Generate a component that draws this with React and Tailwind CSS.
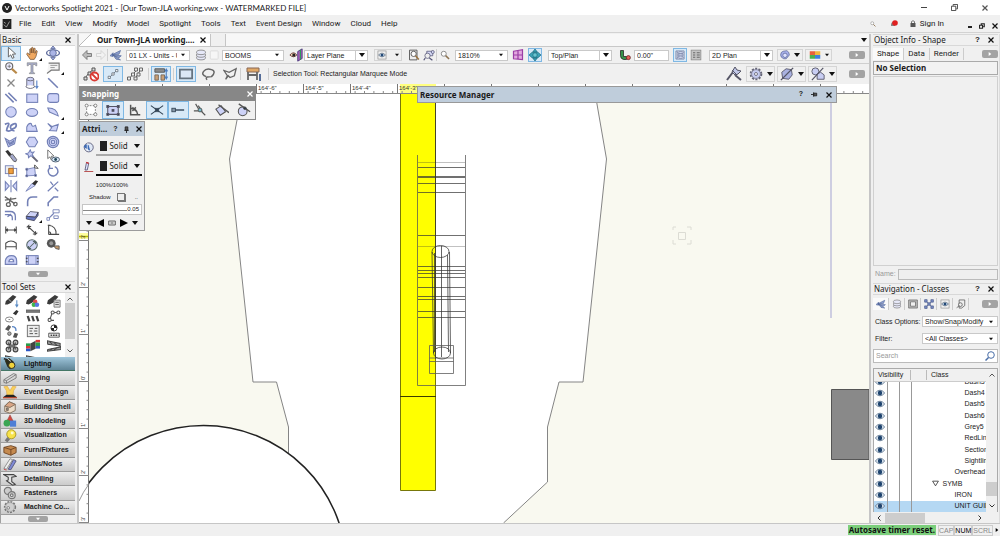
import React from "react";

const B = "#7380b6";
const F = "#cdd2f7";
const D = "#4a4a4a";

/* Line drawings on a 16 x 16 grid */
const ART = {
  arrow: <path d="M5 1.500v11l2.700-2.400 1.800 4 2-.9-1.800-3.800 3.600-.3z" fill="#fff" stroke="#555" />,
  hand: <path d="M3 8l2.500 2V3.500q1-1 1.600 0V8l.4-6q1-1 1.700 0v6l.8-5.300q1.200-.7 1.600.4L11.400 8.500l1.300-3.200q1.200-.2 1.300.8L12.500 12l-2 3.300H6L2 9.500Q2 8 3 8z" fill="#f0a860" stroke="#6b4a2c" strokeWidth=".8" />,
  flyover: <g stroke="#5f6c9c" fill="#aab4e6"><ellipse cx="8" cy="8" rx="7.300" ry="3.500" fill="none" strokeWidth="1.500" /><circle cx="8" cy="8" r="3.800" /><path d="M8 0l2.500 3h-5zM8 16l2.500-3h-5z" /></g>,
  zoom: <g fill="none" stroke="#666"><circle cx="6" cy="6" r="4" fill="#eef" strokeWidth="1.300" /><path d="M6 4v4M4 6h4" strokeWidth=".8" /><path d="M9 9l5.500 5" stroke="#b98a4a" strokeWidth="2.500" /></g>,
  text: <path d="M2.500 2h11v3.500h-1.200L11.500 4H9.200v9l1.800.6v.9H5v-.9l1.800-.6V4H4.500l-.8 1.500H2.500z" fill="#a9aecb" stroke="#777" strokeWidth=".6" />,
  callout: <g fill="#f4f4f4" stroke="#777"><path d="M3 2.500h12v8H6L1.500 14H1" strokeWidth="1.300" /><path d="M5 5h8M5 7.500h5" strokeWidth=".8" /></g>,
  cross: <path d="M4 4l8 8M12 4l-8 8" stroke="#888" strokeWidth="1.500" />,
  symbol: <g fill={F} stroke="#667"><path d="M2 3.500v7q4 3 8 0v-7" /><ellipse cx="6" cy="3.500" rx="4" ry="2" /><path d="M2 10.500l-1 2q5 3.500 10 0l-1-2" fill="#fff" /><path d="M13.500 5v8M12 11.500l1.500 2.500 1.500-2.500" stroke="#5f87c8" strokeWidth="1.300" /></g>,
  line: <path d="M2.500 2.500l11 11" stroke={B} strokeWidth="1.800" />,
  dline: <path d="M1.500 3.500l9.500 9.500M5 2l9.500 9.500" stroke={B} strokeWidth="1.800" />,
  rect: <rect x="2" y="3.500" width="12.500" height="9.500" fill={F} stroke={B} strokeWidth="1.200" />,
  rrect: <rect x="2" y="3" width="12.500" height="10" rx="2.500" fill={F} stroke={B} strokeWidth="1.200" />,
  circle: <circle cx="8" cy="8" r="6" fill={F} stroke={B} strokeWidth="1.200" />,
  ellipse: <ellipse cx="8" cy="8.500" rx="6.500" ry="4.500" fill={F} stroke={B} strokeWidth="1.200" />,
  arc: <path d="M2 3.500Q12 3 14 12.500L4 8z" fill={F} stroke={B} strokeWidth="1.200" />,
  free: <path d="M1 5q6-3 4 1T3 12q4 2 7-2 4-1 4-4t-4-1-2 5 4 2" fill="none" stroke={B} strokeWidth="2" />,
  freeline: <path d="M2 13V8q2-5 5-4 1 4 3 3t2-1l2 7z" fill={F} stroke={B} strokeWidth="1.200" />,
  poly: <path d="M2 4l5 3.500L14 5l-2 7.500L4 12l2.500-3z" fill={F} stroke={B} strokeWidth="1.200" />,
  dpoly: <g fill="none" stroke={B} strokeWidth="1.300"><path d="M1.500 4l5 3 7-4-1.500 7-7 3.500z" fill={F} /><path d="M4 7l3 2.500 4-3-.5 2.500-4 2z" fill="#fff" /></g>,
  hexagon: <path d="M4.800 2.500h6.400L14.500 8l-3.300 5.500H4.800L1.500 8z" fill={F} stroke={B} strokeWidth="1.200" />,
  spiral: <g fill={F} stroke={B} strokeWidth="1.300"><circle cx="8" cy="8" r="6.500" /><circle cx="8" cy="8" r="4.300" /><circle cx="8" cy="8" r="2" /></g>,
  dropper: <g><path d="M1.500 2.500l3-1.500 4 5-2.500 2.500z" fill="#333" /><path d="M6.500 8l3-2.500 5 6.500-1 2.500-2.500-.5z" fill="#a4a9cc" stroke="#555" /></g>,
  wand: <g stroke={B} strokeWidth="1.200"><path d="M8 8l6.500 6.500" stroke="#667" strokeWidth="2.200" /><path d="M6 1l1.200 3 3-.5-2 2.500 1.300 2.500-3-.7L4 10l-.2-3L1 5.500l3-1z" fill={F} /></g>,
  visib: <g><path d="M2 1v10l2.500-2 1.500 3.500 1.500-.7-1.500-3.400 3-.4z" fill="#fff" stroke="#666" /><ellipse cx="11" cy="12" rx="4.500" ry="2.800" fill="#d5e5f5" stroke="#456" /><circle cx="11" cy="12" r="1.600" fill="#245" /></g>,
  clip: <g stroke={B}><rect x="1.500" y="2" width="9" height="9" fill="#eee" /><rect x="5.500" y="5" width="9" height="9" fill="none" /><path d="M5.500 5h5v6h-5z" fill="#f0a040" stroke="#b46d1a" /></g>,
  reshape: <g stroke={B}><path d="M2 6l9-2 1 9-10 .5z" fill={F} /><path d="M11 1l4 4-4-.5z" fill="#fff" stroke="#444" /><path d="M1 5h2v2H1zM1 12.500h2v2H1zM11 12h2v2h-2z" fill="#334" /></g>,
  rotate: <path d="M4 4.500A5.500 5.500 0 1 0 10 3M4 1v4h4" fill="none" stroke={B} strokeWidth="1.600" />,
  mirror: <g fill={F} stroke={B} strokeWidth="1.200"><path d="M1.500 3v10L6 8zM14.500 3v10L10 8z" /><path d="M8 1v14" /></g>,
  knife: <g><path d="M1 14L8 5l3.500 2.500z" fill={F} stroke={B} /><path d="M8 5l4-3.500 3 1-3.500 5z" fill="#333" /></g>,
  trim: <path d="M2 14L14 3M5 3l3 4M10 10l4 4" stroke={B} strokeWidth="1.400" />,
  scissors: <g fill="none" stroke="#666" strokeWidth="1.500"><path d="M1 3l11 8M1 7l13-2" /><circle cx="13" cy="11.500" r="2" /><circle cx="5" cy="12" r="2.200" /><path d="M6 10l2-6" /></g>,
  fillet: <path d="M3 14V9q0-5.500 6-5.500h5" fill="none" stroke={B} strokeWidth="1.800" />,
  chamfer: <path d="M2.500 14V10L9 3.500h5" fill="none" stroke={B} strokeWidth="1.800" />,
  offset: <path d="M1 4h6q6 0 6 6v4M1 7.500h4.500q4 0 4 4V14M4 10l4-3" fill="none" stroke={B} strokeWidth="1.500" />,
  extrude: <g stroke="#334" strokeWidth=".8"><path d="M1.500 9.500L6 4l9 1-3 5.500z" fill={F} /><path d="M1.500 9.500v3l9 2 4.500-6V5l-3 5.500z" fill="#6575c0" /></g>,
  conn: <g fill="#fff" stroke={B}><path d="M2 13L9 6" strokeWidth="1.300" /><path d="M8 2h7v3.500H8zM9 9h5v3H9zM1 11h3v3H1z" /></g>,
  dim: <path d="M2 4v8M14 4v8M2 8h12M4.500 6.500L2 8l2.500 1.500M11.500 6.500L14 8l-2.500 1.500" fill="none" stroke={D} strokeWidth="1.200" />,
  dimdiag: <path d="M2 5l3-3M11 14l3-3M3.500 4l9 8.500M4 7V4h3M12 9.500v3H9" fill="none" stroke={D} strokeWidth="1.200" />,
  dimang: <path d="M3 13V2.500q9 1 8.500 10.500M2 2.500h3M3 13h12M5.500 13q0-3-2.500-3" fill="none" stroke={D} strokeWidth="1.200" />,
  dimarc: <path d="M2 13V6q6-5 12 0v7M2 10h12" fill="none" stroke={D} strokeWidth="1.200" />,
  dia: <g fill={F} stroke="#566" strokeWidth="1.200"><circle cx="8" cy="8" r="6" /><path d="M4 12l8-8M9 4h3v3M4 9v3h3" /></g>,
  tape: <g><circle cx="6" cy="6" r="5" fill="#555" /><circle cx="6" cy="6" r="2.200" fill="#999" /><path d="M9 9h6v4l-4-1z" fill="#c79a6a" stroke="#555" /></g>,
  protract: <path d="M1.500 13V9q1-6 7-6t6 6v4zM5.500 10q.5-3 3-3t2.500 3z" fill={F} fillRule="evenodd" stroke={B} strokeWidth="1.300" />,
  stake: <g fill={F} stroke={B} strokeWidth="1.200"><rect x="1.500" y="3" width="13.500" height="10" /><path d="M4 3v10M12.500 3v10" strokeWidth=".8" /><path d="M1 6h2M1 10h2M13.500 6h2M13.500 10h2" stroke="#333" /></g>,
  lightdn: <g><path d="M0 12l1-4 8-7 4 2-6 7-4 2z" fill="#3a3a3a" /><path d="M4 6l3.500 3" stroke="#bbb" /><path d="M13.500 7v7M12 12l1.500 2.500L15 12" fill="none" stroke="#5a8bc4" strokeWidth="1.200" /></g>,
  lightrgb: <g><path d="M0 11l1-4 8-6 4 2-6 7-4 2z" fill="#3a3a3a" /><circle cx="10.500" cy="9" r="2.600" fill="#e24b4b" /><circle cx="9" cy="12.300" r="2.600" fill="#3fb54a" /><circle cx="12.500" cy="12.300" r="2.600" fill="#5a78e0" /></g>,
  lightdoc: <g><path d="M0 11l1-4 8-6 4 2-6 7-4 2z" fill="#3a3a3a" /><path d="M8 7h7v8H8z" fill="#ddd" stroke="#777" /><path d="M9.500 9.500h4M9.500 12h4" stroke="#555" /></g>,
  focus: <g><ellipse cx="5" cy="12" rx="4.500" ry="2.800" fill="#fff" stroke="#777" /><path d="M4 12h2" stroke="#777" /><path d="M9 5l4-4 2.500 1.500-3 4.500z" fill="#333" /></g>,
  bars: <g fill="#777" stroke="#555" strokeWidth=".6"><path d="M0 1h16v3H0z" /><path d="M2 8l2 6M7 8l2 6M12 8l2 6" stroke="#444" strokeWidth="2.600" /></g>,
  chain: <g fill="#fff" stroke="#555" strokeWidth="1.200"><path d="M3 13L6 4l7 0M4 13h4" /><circle cx="3" cy="12.500" r="1.800" /><circle cx="6.500" cy="4" r="1.800" /><circle cx="13" cy="4" r="1.800" /></g>,
  spots: <g><path d="M0 6l4-5 3 2-3 5zM9 15l2-5 4 1-2 5z" fill="#555" /><path d="M8 3q5 0 4.500 5" fill="none" stroke="#5b86c5" strokeWidth="1.500" /><circle cx="5" cy="11" r="2" fill="#aaa" stroke="#555" /></g>,
  legend: <g fill="#eee" stroke="#666"><rect x="1.500" y="1.500" width="13.500" height="13" /><path d="M4 5h4M10 5h3M4 8h3M9 8h4M4 11h4M10 11h3" stroke="#444" /></g>,
  lblid: <g><circle cx="8" cy="4.500" r="3.500" fill="#fff" stroke="#222" /><path d="M8 1v3.500h3.500A3.500 3.500 0 0 0 8 1zM8 8V4.500H4.500A3.500 3.500 0 0 0 8 8z" fill="#222" /><path d="M2 10.500h12v4.500H2z" fill="#fff" stroke="#444" /><path d="M4 12.800h9" stroke="#444" strokeWidth="1.800" strokeDasharray="2 .8" /></g>,
  four: <g fill="#bbb" stroke="#444" strokeWidth="1.300"><circle cx="4" cy="4" r="2.700" /><circle cx="12" cy="4" r="2.700" /><circle cx="4" cy="12" r="2.700" /><circle cx="12" cy="12" r="2.700" /><path d="M4 4l1 3h6l1-3M4 12l1-3h6l1 3" fill="none" /></g>,
  cmyk: <g><path d="M0 5h5v3H0z" fill="#2a9a4a" /><path d="M0 8h5v3H0z" fill="#d33" /><path d="M0 11h5v3H0z" fill="#2a55c5" /><path d="M5 5l6-3v9l-6 3z" fill="#444" /><path d="M11 1h5v3h-5z" fill="#d33" /><path d="M11 4h5v4h-5z" fill="#2a9a4a" /><path d="M11 8h5v3h-5z" fill="#345ac0" /></g>,
  truss: <g stroke="#444" strokeWidth="1.200" fill="#999"><path d="M0 2l15 3v3L1 6zM1 12l15-3v3L0 14z" /><path d="M3 3l3 3M8 4l3 3M3 13l3-2M8 13l3-3" /></g>,
  catLight: <g><path d="M2 4l5-3 5 4 1 6-5 3-3-3z" fill="#2c2c1c" /><circle cx="10" cy="9.500" r="3.600" fill="#f2d43c" stroke="#222" /><path d="M5 2l4 3" stroke="#eee" /><path d="M1 2l4 1" stroke="#222" strokeWidth="1.500" /></g>,
  catRig: <path d="M1 10L12 3l3 1v4L4 14l-3-1zM1 10l3 1 11-7M4 11v3" fill="#d7d7d7" stroke="#777" />,
  catEvent: <g><path d="M4.500 12Q5 6 1 2l4-.5 3 5 3-5 4 .5q-4 4-3.500 10z" fill="#f7cf5a" stroke="#e0a030" strokeWidth=".6" /><path d="M0 14l4-3h8l4 3z" fill="#222" /><path d="M0 14.500h16" stroke="#b4452c" strokeWidth="1.500" /></g>,
  catBuild: <g stroke="#7d6a58"><path d="M2 7l5-5 7 3v7l-6 3-6-2z" fill="#ecdcc8" /><path d="M7 2L2 7l6 1.500L14 5z" fill="#d9a585" /><path d="M4 9h2v3H4z" fill="#888" /></g>,
  cat3d: <g><path d="M8 1l3.500 7h-7z" fill="#d4463c" stroke="#833" strokeWidth=".6" /><circle cx="4.500" cy="10.500" r="3.800" fill="#3aa552" /><path d="M8 7.500h7v7H8z" fill="#4f7fd6" /></g>,
  catVis: <g><circle cx="9.500" cy="6" r="5.200" fill="#f7e24a" stroke="#a59220" /><path d="M5 9l3 3-3 3-3-2z" fill="#777" /><circle cx="10.500" cy="4.500" r="1.700" fill="#fffbd0" /></g>,
  catFurn: <g stroke="#6d4422"><path d="M1 5l8-2 6 2v6l-6 3-8-3z" fill="#c58a4f" /><path d="M1 5l8 2.500L15 5M9 7.500V14" fill="none" /></g>,
  catDims: <g><path d="M1 13L8 2l3 1-7 11z" fill="#eee" stroke="#888" /><path d="M6 14l6-11 3 1.500-6 10z" fill="#7f8ad6" stroke="#557" /><path d="M1 14l3 1" stroke="#c44" /></g>,
  catDetail: <path d="M1 3h11l3 2-5 1v5l4 3-3 1-7-5 2-1V6z" fill="#e3e3e3" stroke="#444" strokeWidth="1.200" />,
  catFast: <g fill="#ccc" stroke="#777" strokeWidth="1.300"><circle cx="5.500" cy="5.500" r="4" /><circle cx="10" cy="10.500" r="4" /><circle cx="10" cy="10.500" r="1.500" fill="#fff" /></g>,
  catMach: <g fill="#cfcfcf" stroke="#777"><circle cx="8" cy="8" r="6" strokeWidth="2" strokeDasharray="2.200 1.300" /><circle cx="8" cy="8" r="5" stroke="#aaa" /><circle cx="6" cy="9" r="1.500" fill="#eee" /></g>,
  back: <path d="M8 2L2 8l6 6v-4h6V6H8z" fill="#bbb" stroke="#777" strokeWidth="1.200" />,
  fwd: <path d="M8 2l6 6-6 6v-4H2V6h6z" fill="#f2f2f2" stroke="#ccc" />,
  classes: <g fill="#8fa0d0" stroke="#4e6498" strokeWidth=".9"><path d="M0 9l4-4v5zM3 7.500L14 2l-2 5zM3 8l12 1-3 2.500zM4 8l10 6.500-6-1z" /></g>,
  layers: <g fill="#e6e8f8" stroke="#777"><ellipse cx="8" cy="11.500" rx="6" ry="3" /><ellipse cx="8" cy="8" rx="6" ry="3" /><ellipse cx="8" cy="4.500" rx="6" ry="3" /></g>,
  blank: <rect x="3" y="2.500" width="10.500" height="11" rx="1" fill="#f6f6f6" stroke="#d5d5d5" />,
  plane: <g><path d="M1 8q4-5 8 0-4 4-8 0z" fill="#f4d9bb" stroke="#633" /><circle cx="5.500" cy="8" r="1.800" fill="#222" /><path d="M10 4l5-3v11l-5 3z" fill="#b35cc0" stroke="#437" /><path d="M13 2v11" stroke="#2e9b5c" strokeWidth="1.500" /></g>,
  eyebox: <g><rect x="1.500" y="1.500" width="13" height="13" fill="#f2f2f2" stroke="#888" /><path d="M2.500 8q5.500-6 11 0-5.500 6-11 0z" fill="#c9d8ea" stroke="#456" /><circle cx="8" cy="8" r="2.200" fill="#234a78" /></g>,
  zoomdoc: <g fill="none" stroke="#555" strokeWidth="1.200"><path d="M2 1.500h10v13H2z" fill="#eee" /><circle cx="7.500" cy="6.500" r="3.500" fill="#fff" /><path d="M10 9l4.500 5" stroke="#9a7340" strokeWidth="2" /></g>,
  zoomsel: <g fill="#d5d9f5" stroke="#557"><path d="M5 3h8v6H5z" /><circle cx="13" cy="4" r="2" /><circle cx="6" cy="9" r="3.500" fill="#eee" /><path d="M3 12l-2 3M8.500 12l4 3" strokeWidth="1.600" /></g>,
  mag: <g fill="none" stroke="#777" strokeWidth="1.300"><circle cx="6" cy="6" r="4" fill="#fff" /><path d="M9 9l5.500 5.500" stroke="#8d7350" strokeWidth="2.400" /></g>,
  pink: <path d="M2 3l12-2v13L2 13zM8 2v12M2 8h12" fill="#e3a8e0" stroke="#9b3ea6" strokeWidth="1.600" />,
  teal: <g fill="#3ea5b8" stroke="#1d6f83"><path d="M0 8l4-3.500h8L16 8l-4 3.500H4zM8 0l3 4H5zM8 16l3-4H5z" /><circle cx="8" cy="8" r="3" fill="#6bc4d0" /></g>,
  angle: <g><path d="M2 2h4v8h4v4H6Q2 13 2 9z" fill="#37924a" stroke="#222" /><circle cx="12.500" cy="11.500" r="2.700" fill="#e8605a" stroke="#622" /></g>,
  sheets: <g fill="#dfe5f8" stroke="#4d5c88"><path d="M1.500 1.500h13v13h-13z" fill="#f4f8ff" /><ellipse cx="9" cy="4.500" rx="4.500" ry="1.800" /><ellipse cx="9" cy="8" rx="4.500" ry="1.800" /><ellipse cx="9" cy="11.500" rx="4.500" ry="1.800" /><path d="M3.500 2v12" /></g>,
  list: <g><rect x="1.500" y="1.500" width="13" height="13" fill="#c4c4c4" stroke="#888" /><path d="M4 5h3M9 5h4M4 8h3M9 8h4M4 11h3M9 11h4" stroke="#666" strokeWidth="1.300" /></g>,
  orb: <g fill="#a7b0ea" stroke="#4a5688"><path d="M1 8q0-5 4-6l6-1q4 2 4 7l-5 6H6Q1 12 1 8z" /><circle cx="8" cy="8.500" r="3.500" fill="#dfe3ff" /></g>,
  swatch: <g><path d="M1 3h7v5H1z" fill="#e8603c" /><path d="M1 8h7v5H1z" fill="#4bb04f" /><path d="M8 3h7v5H8z" fill="#f0b73e" /><path d="M8 8h7v5H8z" fill="#3f7fe0" /></g>,
  nosel: <g fill="#ddd" stroke="#555"><path d="M2 12L6 7l4-3" /><path d="M1 11h3v3H1zM5 6h3v3H5zM9 2h3v3H9z" /><circle cx="11.500" cy="10.500" r="4" fill="#fff" stroke="#d93a32" strokeWidth="1.800" /><path d="M9 8l5 5" stroke="#d93a32" strokeWidth="1.800" /></g>,
  nodes: <g fill="#fff" stroke="#5a6470"><path d="M3 13l5-5 5-5" /><path d="M1.500 11h3v3h-3zM6.500 6.500h3v3h-3zM11.500 2h3v3h-3z" /></g>,
  nodes2: <g fill="#eee" stroke="#666"><path d="M2 13l4-5 4-4M8 13l3-5 3-5" /><path d="M.5 11h3v3h-3zM4.500 7h3v3h-3zM7.500 2h3v3h-3zM7 11h3v3H7zM10 7h3v3h-3zM12.500 2h3v3h-3z" /></g>,
  table: <g><path d="M1 2h11v4H1z" fill="#8c8c8c" stroke="#555" /><path d="M1 9h4v6H1zM8 9h4v6H8z" fill="#c9a077" stroke="#765" /><path d="M14 3v10M12.500 5L14 2.500 15.500 5M12.500 11l1.500 2.500 1.500-2.500" fill="none" stroke="#4f7fc0" strokeWidth="1.300" /></g>,
  marq: <rect x="1" y="3" width="14" height="10" fill="#dbe7f5" stroke="#66737f" strokeWidth="2" />,
  lasso: <path d="M6 11Q0 9 3 5t9-2 0 8l-5 .5q-2 1 0 3" fill="none" stroke="#666" strokeWidth="1.700" />,
  plasso: <path d="M3 14l2-4-4-6 6 2 8-4-2 8-5 2-2-2z" fill="none" stroke="#666" strokeWidth="1.500" />,
  bench: <g><path d="M1 2h12v4H1z" fill="#e0a866" stroke="#865" /><path d="M2 6v8M11 6v8M2 9h9" stroke="#666" strokeWidth="1.800" /><path d="M14 8v7" stroke="#556c98" strokeWidth="2" /></g>,
  plug: <g fill="#c0c6e6" stroke="#556"><path d="M1 14l6-8" strokeWidth="2" /><path d="M6 4l5 5M9 1l2 3 4 1-3 3-3 1-3-3z" /><path d="M9 9l6 5" strokeWidth="2" /></g>,
  gear: <g fill="#c5cbf0" stroke="#667"><circle cx="8" cy="8" r="6" strokeWidth="2.500" strokeDasharray="2.300 1.500" /><circle cx="8" cy="8" r="5" stroke="#889" /><circle cx="8" cy="8" r="1.700" fill="#fff" /></g>,
  slash: <g fill="#a9b1e0" stroke="#556"><path d="M2 6l5-4 6 1 1 6-4 5-7-1z" /><path d="M1 15L15 1" strokeWidth="1.600" /></g>,
  shape: <g fill="#c8cdf2" stroke="#556"><circle cx="5" cy="5" r="4" /><path d="M7 14V8l4-2 4 3v5z" /><path d="M1 15L14 1" strokeWidth="1.300" /></g>,
  sGrid: <g fill="#fff" stroke="#777"><path d="M3 3h10v10H3z" strokeDasharray="2 1.500" /><circle cx="3" cy="3" r="1.700" /><circle cx="13" cy="3" r="1.700" /><circle cx="3" cy="13" r="1.700" /><circle cx="13" cy="13" r="1.700" /></g>,
  sObj: <g fill="#cdd2f7" stroke="#556" strokeWidth="1.200"><path d="M2 4h12v9H2z" /><path d="M1 3h2v2H1zM13 3h2v2h-2zM1 12h2v2H1zM13 12h2v2h-2zM7 7.500h2v2H7z" fill="#223" /></g>,
  sAng: <path d="M3 2v11.500h11M3 6q7 0 8 7M5 5l4 4M9 5L5 9" fill="none" stroke="#555" strokeWidth="1.700" />,
  sInt: <g stroke="#345"><path d="M1 3l14 10M1 13L15 3" strokeWidth="1.300" /><path d="M6 6l4 4M10 6l-4 4" strokeWidth="2.200" /></g>,
  sPt: <g stroke="#345"><path d="M4 8h11" strokeWidth="1.600" /><rect x="1" y="6" width="4" height="4" fill="#89a" /></g>,
  sDist: <g stroke="#555" fill="#7bc"><path d="M3 1l4 7M1 9h9l-4-6M8 8l6 6" strokeWidth="1.300" fill="none" /><circle cx="8" cy="8" r="2.200" /></g>,
  sEdge: <g stroke="#555"><path d="M1 7l6-4 5 7-6 4z" fill="#cdd2f7" strokeWidth="1.200" /><path d="M4 2l12 9" strokeWidth="1.600" /></g>,
  sTan: <g stroke="#555"><circle cx="6.500" cy="9.500" r="5" fill="#cdd2f7" strokeWidth="1.200" /><path d="M2 1l13 9" strokeWidth="1.600" /><circle cx="9" cy="6" r="1.500" fill="#234" /></g>,
  bucket: <g><circle cx="9" cy="8.500" r="6" fill="#dfe8f6" stroke="#446" /><path d="M2 8q3-6 7-2l2 7" fill="#3d6bb5" /><path d="M7 3v10" stroke="#fff" /></g>,
  pen: <g><path d="M4 12L6 2l3 1-2 9z" fill="#dfe5ff" stroke="#446" /><path d="M5 1l4 1v2L6 3z" fill="#c33" /><path d="M3 14h12" stroke="#a22" /></g>,
  eye: <g><path d="M.5 8Q8-1 15.500 8 8 17 .5 8z" fill="#e6eef6" stroke="#58708c" strokeWidth="1.400" /><circle cx="8" cy="8" r="3.600" fill="#20456f" /></g>,
  frame: <path d="M1 1.500h14v13H1zM4 4.500h8v7H4z" fill="#bbb" fillRule="evenodd" stroke="#555" />,
  net: <g fill="#7f90c8" stroke="#3b4d80"><path d="M3 3l10 10M13 3L3 13" /><path d="M1 1h4v4H1zM11 1h4v4h-4zM1 11h4v4H1zM11 11h4v4h-4zM6 6h4v4H6z" /></g>,
  refer: <g fill="#eee" stroke="#555" strokeWidth="1.200"><path d="M5 1.500h9v9L9 14.500H5z" /><circle cx="7" cy="9" r="3" /><path d="M1 14l4-3" /></g>,
  vw: <g><path d="M1 0h14v16H1z" fill="#222" /><path d="M3 9l4 4 5-9M3 5l3 2" stroke="#ddd" fill="none" /></g>,
};

const Art = ({ n, className = "size-3.5" }) => (
  <svg viewBox="0 0 16 16" fill="none" className={`${className} shrink-0`} aria-hidden="true">{ART[n]}</svg>
);
const Down = ({ className = "size-1.5" }) => (
  <svg viewBox="0 0 6 6" className={`${className} shrink-0`} aria-hidden="true"><path d="M0 1h6L3 5z" fill="#111" /></svg>
);
const X = ({ className = "size-1.5", color = "#111" }) => (
  <svg viewBox="0 0 6 6" className={`${className} shrink-0`} aria-hidden="true"><path d="M.5.5l5 5M5.500.5l-5 5" stroke={color} strokeWidth="1.200" /></svg>
);
const Pin = ({ side }) => (
  <svg viewBox="0 0 8 8" className="size-[7px] shrink-0" aria-hidden="true">
    <path d={side ? "M0 4h3M3 1.500v5M3 2.500h3.500v3H3z" : "M4 8V5M1.500 5h5M2.500 5V1h3v4z"} fill="#555" stroke="#222" />
  </svg>
);
const Sep = () => <span className="h-3 w-px shrink-0 bg-[#cfcfcf]" />;

function Tool({ n, label, className = "", art, on, children }) {
  return (
    <button type="button" aria-label={label} className={`flex shrink-0 items-center justify-center ${on ? "border border-[#7fb8e4] bg-[#d8e9f7]" : ""} ${className}`}>
      <Art n={n} className={art} />
      {children}
    </button>
  );
}

function Pick({ label, value, className, split }) {
  return (
    <span className={`relative flex h-[11px] shrink-0 items-center border border-[#c9c9c9] bg-white ${className}`}>
      <select aria-label={label} className="h-full w-full appearance-none overflow-hidden pr-3 pl-0.5 text-[7px] leading-[9px] text-[#222] outline-none">
        <option>{value}</option>
      </select>
      <span className={`pointer-events-none absolute inset-y-0 right-0 flex w-3 items-center justify-center bg-white ${split ? "border-l border-[#c9c9c9]" : ""}`}>
        <Down className={split ? "size-1.5" : "size-1"} />
      </span>
    </span>
  );
}

function Pill({ label, down }) {
  return (
    <button type="button" aria-label={label} className={`flex shrink-0 items-center justify-center rounded-xs bg-[#a3a3a3] ${down ? "h-1.5 w-5" : "h-2 w-4"}`}>
      <svg viewBox="0 0 6 6" className="size-1" aria-hidden="true"><path d={down ? "M0 1h6L3 5z" : "M1 0v6l4-3z"} fill="#fff" /></svg>
    </button>
  );
}

function PaneHead({ title, help }) {
  return (
    <header className="flex h-3 shrink-0 items-center border-y border-[#d8d8d8] bg-[#f0f0f0] pr-0.5 pl-px">
      <h2 className="flex-1 font-[Noto_Sans,sans-serif] text-[8px] leading-[10px] whitespace-nowrap">{title}</h2>
      {help && <button type="button" aria-label="Help" className="mr-1.5 text-[8px] leading-[10px] font-bold">?</button>}
      <button type="button" aria-label={`Close ${title}`} className="p-0.5"><X /></button>
    </header>
  );
}

const BASIC = [
  ["arrow", "Selection"], ["hand", "Pan", 1], ["flyover", "Flyover"],
  ["zoom", "Zoom"], ["text", "Text"], ["callout", "Callout", 1],
  ["cross", "2D Locus"], ["symbol", "Symbol Insertion"], ["line", "Line"],
  ["dline", "Double Line"], ["rect", "Rectangle"], ["rrect", "Rounded Rectangle"],
  ["circle", "Circle"], ["ellipse", "Oval"], ["arc", "Arc", 1],
  ["free", "Freehand"], ["freeline", "Spline"], ["poly", "Polyline", 1],
  ["dpoly", "Double Polygon"], ["hexagon", "Regular Polygon"], ["spiral", "Spiral"],
  ["dropper", "Eyedropper"], ["wand", "Select Similar"], ["visib", "Visibility"],
  ["clip", "Clip"], ["reshape", "Reshape"], ["rotate", "Rotate"],
  ["mirror", "Mirror"], ["knife", "Split"], ["trim", "Trim"],
  ["scissors", "Connect/Combine"], ["fillet", "Fillet"], ["chamfer", "Chamfer"],
  ["offset", "Offset"], ["extrude", "Push/Pull", 1], ["conn", "Move by Points"],
  ["dim", "Linear Dimension"], ["dimdiag", "Diagonal Dimension"], ["dimang", "Angular Dimension"],
  ["dimarc", "Arc Length Dimension"], ["dia", "Radial Dimension"], ["tape", "Tape Measure"],
  ["protract", "Protractor"], ["stake", "Stake"],
];
const SETS = [
  ["lightdn", "Lighting Instrument"], ["lightrgb", "Color Wash"], ["lightdoc", "Instrument Insertion"],
  ["focus", "Focus Point"], ["bars", "Lighting Pipe"], ["chain", "Cable"],
  ["spots", "Replace Instrument"], ["legend", "Label Legend"], ["lblid", "Accessory"],
  ["four", "Multi Circuit"], ["cmyk", "Video Screen"], ["truss", "Straight Truss"],
  ["truss", "Curved Truss"], ["truss", "Truss Item"],
];
const CATS = [
  ["catLight", "Lighting"], ["catRig", "Rigging"], ["catEvent", "Event Design"], ["catBuild", "Building Shell"],
  ["cat3d", "3D Modeling"], ["catVis", "Visualization"], ["catFurn", "Furn/Fixtures"], ["catDims", "Dims/Notes"],
  ["catDetail", "Detailing"], ["catFast", "Fasteners"], ["catMach", "Machine Co..."],
];

function LeftSide() {
  return (
    <aside className="flex w-[77px] shrink-0 flex-col border-l border-[#a0a0a0] pr-0.5">
      <PaneHead title="Basic" />
      <div className="grid h-[221px] shrink-0 grid-cols-[20px_21px_22px] grid-rows-15 bg-white">
        {BASIC.map(([n, label, more], i) => (
          <Tool key={label} n={n} label={label} on={i === 0} className="relative">
            {more && <svg viewBox="0 0 4 4" className="absolute right-0 bottom-0 size-[3px]" aria-hidden="true"><path d="M4 0v4H0z" fill="#111" /></svg>}
          </Tool>
        ))}
      </div>
      <div className="flex h-3.5 shrink-0 items-center justify-center"><Pill label="More basic tools" down /></div>
      <PaneHead title="Tool Sets" />
      <div className="flex h-16 shrink-0 bg-white">
        <div className="grid flex-1 auto-rows-[15px] grid-cols-3 overflow-hidden">
          {SETS.map(([n, label]) => <Tool key={label} n={n} label={label} />)}
        </div>
        <div className="flex w-2.5 flex-col items-center justify-between bg-[#f0f0f0] py-1">
          <svg viewBox="0 0 6 4" className="w-1.5" aria-hidden="true"><path d="M.5 3.500L3 1l2.500 2.500" fill="none" stroke="#555" /></svg>
          <span className="mb-2 h-9 w-full bg-[#cdcdcd]" />
          <svg viewBox="0 0 6 4" className="w-1.5" aria-hidden="true"><path d="M.5.5L3 3 5.500.5" fill="none" stroke="#555" /></svg>
        </div>
      </div>
      <nav aria-label="Tool sets" className="grid h-[158px] shrink-0 grid-rows-11">
        {CATS.map(([n, t], i) => (
          <button key={t} type="button" className={`flex items-center gap-[7px] border-b pl-0.5 text-left text-[7px] leading-[10px] font-bold whitespace-nowrap ${i ? "border-[#9d9d9d] bg-linear-to-b from-[#ececec] to-[#cbcbcb] text-[#222]" : "border-[#476] bg-linear-to-b from-[#9fc6dc] to-[#5f8496] text-[#111]"}`}>
            <Art n={n} /><span>{t}</span>
          </button>
        ))}
      </nav>
      <div className="flex flex-1 items-start justify-center pt-px"><Pill label="More tool sets" down /></div>
    </aside>
  );
}

function ViewBar() {
  return (
    <div className="flex h-[17px] shrink-0 items-center overflow-hidden border-b border-[#cfcfcf]">
      <Tool n="back" label="Previous view" className="w-4" art="size-3" />
      <Tool n="fwd" label="Next view" className="w-3" art="size-3" />
      <Sep />
      <Tool n="classes" label="Classes" className="mr-0.5 w-4" art="size-3" />
      <Pick label="Active class" value="01 LX - Units - U" className="mr-1 w-16" />
      <Tool n="layers" label="Layers" className="w-3.5" art="size-3" />
      <Tool n="blank" label="Layer options" className="mr-0.5 w-3" art="size-3" />
      <Pick label="Active layer" value="BOOMS" className="mr-1 w-[62px]" />
      <Tool n="plane" label="Plane" className="w-4" />
      <Pick label="Active plane" value="Layer Plane" className="mr-1.5 w-16" split />
      <Tool n="eyebox" label="Saved views" className="mr-1 h-3 w-7 gap-2 border border-[#d5d5d5]" art="size-2.5"><Down className="size-1" /></Tool>
      <Tool n="zoomdoc" label="Fit to page" className="w-4" art="size-3" />
      <Tool n="zoomsel" label="Fit to objects" className="w-3.5" art="size-3" />
      <Sep />
      <Tool n="mag" label="Zoom level" className="mr-0.5 w-4" art="size-2.5" />
      <Pick label="Zoom" value="1810%" className="mr-1 w-[53px]" />
      <Tool n="pink" label="Working plane" className="mr-1 w-3" art="size-3" />
      <Tool n="teal" label="3D flyover" on className="mr-1 h-3.5 w-3.5" art="size-3" />
      <Pick label="View" value="Top/Plan" className="mr-1.5 ml-0.5 w-16" split />
      <Tool n="angle" label="Rotate plan" className="mr-0.5 w-3.5" art="size-3" />
      <input aria-label="Plan rotation" defaultValue={'0.00"'} className="mr-1 h-[11px] w-[35px] shrink-0 border border-[#c9c9c9] bg-white pl-0.5 text-[7px] leading-[9px] outline-none" />
      <Tool n="sheets" label="Unified view" on className="mr-0.5 h-3.5 w-3.5" art="size-2.5" />
      <Tool n="list" label="Multiple views" className="mr-1.5 w-3.5" art="size-3" />
      <Pick label="Render mode" value="2D Plan" className="mr-1 w-16" split />
      <Tool n="orb" label="Render options" className="mr-0.5 h-3 w-[26px] gap-1 border border-[#d5d5d5]" art="size-2.5"><Down /></Tool>
      <Tool n="swatch" label="Color options" className="h-3 w-[27px] gap-1 border border-[#d5d5d5]" art="size-3"><Down className="size-1" /></Tool>
      <span className="mr-1 ml-auto flex"><Pill label="More view options" /></span>
    </div>
  );
}

function ToolBar() {
  return (
    <div className="flex h-5 shrink-0 items-center overflow-hidden pl-1">
      <Tool n="nosel" label="Disable interactive scaling" className="mr-1 w-4" art="size-4" />
      <Tool n="nodes" label="Single object scaling" on className="h-4 w-5" art="size-3" />
      <Tool n="nodes2" label="Multiple object scaling" className="mr-px w-6" art="size-4" />
      <Sep />
      <Tool n="table" label="Wall insertion" on className="mx-0.5 h-4 w-5" art="size-3.5" />
      <Sep />
      <Tool n="marq" label="Rectangular marquee" on className="ml-0.5 h-4 w-5" />
      <Tool n="lasso" label="Lasso marquee" className="w-6" />
      <Tool n="plasso" label="Polygonal marquee" className="w-5" />
      <Sep />
      <Tool n="bench" label="Wall insertion mode" className="mr-0.5 ml-px w-6" art="size-4" />
      <Sep />
      <p className="ml-1 text-[7px] leading-[10px] whitespace-nowrap text-[#222]">Selection Tool: Rectangular Marquee Mode</p>
      <Tool n="plug" label="Data tag" className="mr-0.5 ml-auto w-5" art="size-4" />
      <Tool n="gear" label="Settings" className="mr-0.5 h-4 w-[29px] gap-1 border border-[#d5d5d5]"><Down /></Tool>
      <Tool n="slash" label="Visibility options" className="mr-0.5 h-4 w-[29px] gap-1 border border-[#d5d5d5]"><Down /></Tool>
      <Tool n="shape" label="Shape options" className="mr-3 h-4 w-[29px] gap-1 border border-[#d5d5d5]"><Down /></Tool>
      <span className="mr-1 flex"><Pill label="More tool options" /></span>
    </div>
  );
}

const RUNGS = [162, 167, 176, 177, 183, 192, 235, 246, 266, 270, 273, 277, 287, 296, 299, 311, 317];
const FAINT = [162, 246];
const MAJORS = [10, 9, 8, 7, 6, 5, 4, 3, 2, 1, 0, -1, -2, -3, -4, -5, -6];

function Drawing() {
  return (
    <svg viewBox="79 84 790 439" preserveAspectRatio="xMinYMin slice" className="absolute inset-0 size-full" role="img" aria-label="Plan drawing">
      <rect x="79" y="84" width="790" height="439" fill="#f9f9f0" />
      <path d="M244 84L229.500 159 253 382h23.500l12 45v96H503.500l44-41V427l11.500-45h24l23.500-223L593.500 84z" fill="#fff" />
      <path d="M244 84L229.500 159 253 382h23.500l12 45v26M503.500 523l44-41V427l11.500-45h24l23.500-223L593.500 84" fill="none" stroke="#858585" />
      <circle cx="203.500" cy="568.500" r="143" fill="#fff" stroke="#222" strokeWidth="1.500" />
      <path d="M400.500 84h35v406.500h-35z" fill="#ff0" stroke="#77770a" />
      <path d="M400 396.500h36" stroke="#3c3c00" />
      <g fill="none" stroke="#333" strokeOpacity=".75">
        <path d="M417.500 155v230.500h48V155" stroke="#555" />
        {RUNGS.map((y) => <path key={y} d={`M418 ${y + 0.5}h47`} strokeOpacity={FAINT.includes(y) ? 0.3 : 0.7} />)}
        <ellipse cx="440.500" cy="251.500" rx="8.500" ry="6" />
        <ellipse cx="442" cy="353" rx="8.500" ry="6" />
        <path d="M441.500 246v111M432 252l1.500 101M434.500 253v99M435.500 84v275M447.500 255l1 97M449.500 252l1 101" />
        <path d="M429.500 345.500h24v28h-24zM429.500 358h24M429.500 361.500h24" stroke="#555" />
      </g>
      <path d="M831 84v234" stroke="#bfbfdc" strokeWidth="1.500" />
      <path d="M831.500 389.500H869v70h-37.500z" fill="#898989" stroke="#555" />
      <path d="M673 230v-3h3M687 227h4v3M691 240v4h-4M676 244h-3v-4M678.500 232.500h7v7h-7z" fill="none" stroke="#dcdcd4" />

      <rect x="79" y="93" width="10" height="430" fill="#fff" />
      <path d="M79 501q4-9 10-17" fill="none" stroke="#999" />
      <rect x="79" y="233" width="10" height="6" fill="#ffffa0" />
      <path d="M79 236.500h10" stroke="#b9b900" strokeWidth="1.500" />
      <path d="M88.500 93v430" stroke="#777" />
      {Array.from({ length: 46 }, (_, i) => <path key={i} d={`M86.500 ${99.5 + i * 9.4}h2`} stroke="#888" />)}
      {["3'", "2'", "1'", "0'", "1'", "2'", "3'"].map((t, i) => (
        <g key={i}>
          <path d={`M79 ${240.5 + i * 47}h10`} stroke="#888" />
          <text transform={`translate(85 ${239 + i * 47}) rotate(-90)`} fontSize="6" fill="#444">{t}</text>
        </g>
      ))}
      <rect x="79" y="84" width="790" height="9" fill="#fff" />
      <rect x="400" y="84" width="36" height="9" fill="#ffff80" />
      <path d="M79 93.500h790" stroke="#888" />
      {Array.from({ length: 84 }, (_, i) => <path key={i} d={`M${82.5 + i * 9.4} 91v2`} stroke="#888" />)}
      {MAJORS.map((n, i) => (
        <g key={n}>
          <path d={`M${68.5 + i * 47} 84v9`} stroke="#777" />
          {n > 2 && n < 7 && <text x={70 + i * 47} y="89.500" fontSize="6" fill="#333">{`164'-${n}"`}</text>}
        </g>
      ))}
    </svg>
  );
}

const SNAPS = [["sGrid", "Snap to Grid"], ["sObj", "Snap to Object"], ["sAng", "Snap to Angle"], ["sInt", "Snap to Intersection"], ["sPt", "Smart Points"], ["sDist", "Snap to Distance"], ["sEdge", "Smart Edge"], ["sTan", "Snap to Tangent"]];

function Windows() {
  return (
    <>
      <section className="absolute top-0.5 left-0 w-[177px] border border-[#8a8a8a] bg-[#f0f0f0]">
        <header className="flex h-3.5 items-center bg-[#878787] px-0.5 text-white">
          <h2 className="flex-1 font-[Noto_Sans,sans-serif] text-[8px] leading-3 font-bold">Snapping</h2>
          <button type="button" aria-label="Close snapping"><X color="#fff" /></button>
        </header>
        <div className="grid h-[18px] grid-cols-8">
          {SNAPS.map(([n, l], i) => <Tool key={l} n={n} label={l} on={[1, 3, 4].includes(i)} />)}
        </div>
      </section>

      <section className="absolute top-[37px] left-0 w-[66px] border border-[#9c9c9c] bg-[#f0f0f0] text-[#222]">
        <header className="flex h-3.5 items-center gap-1.5 bg-[#bfcddb] pr-1 pl-0.5">
          <h2 className="flex-1 font-[Noto_Sans,sans-serif] text-[8px] leading-3 font-bold">Attri...</h2>
          <button type="button" aria-label="Help" className="text-[7px] font-bold">?</button>
          <button type="button" aria-label="Pin"><Pin /></button>
          <button type="button" aria-label="Close attributes"><X /></button>
        </header>
        {[["bucket", "Fill", "border-[#aaa]"], ["pen", "Pen", "border-black"]].map(([n, l, line]) => (
          <div key={l} className="flex h-5 gap-0.5 px-0.5 pt-0.5">
            <span className="flex w-3 items-center"><Art n={n} className="size-3" /></span>
            <label className={`relative flex flex-1 items-center border-b-2 ${line}`}>
              <span className="ml-1 size-2.5 bg-[#222]" />
              <select aria-label={`${l} style`} className="w-full appearance-none pl-0.5 font-[Noto_Sans,sans-serif] text-[8px] leading-3 outline-none"><option>Solid</option></select>
              <Down className="absolute right-0.5 size-1.5" />
            </label>
          </div>
        ))}
        <p className="mt-1 text-center text-[6px] leading-[10px]">100%/100%</p>
        <div className="flex h-3.5 items-center justify-end gap-1.5 pr-1.5 text-[6px]">
          <span>Shadow</span>
          <button type="button" aria-label="Drop shadow" className="size-2 border border-[#777] bg-[#eee] shadow-[1px_1px_0_#777]" />
          <span className="pl-1">..</span>
        </div>
        <div className="mx-0.5 flex h-[11px] items-center border border-[#c5c5c5] bg-white pr-0.5 text-[6px]">
          <span className="h-0.5 flex-1 border-b border-[#888]" /><span>0.05</span>
        </div>
        <div className="flex h-[15px] items-center justify-between px-1.5">
          <Down /><svg viewBox="0 0 8 8" className="size-2" aria-hidden="true"><path d="M8 0v8L0 4z" /></svg>
          <svg viewBox="0 0 12 8" className="h-1.5 w-2" aria-hidden="true"><path d="M1 1h10v6H1zM4 4h4" fill="#ddd" stroke="#666" strokeWidth="1.500" /></svg>
          <svg viewBox="0 0 8 8" className="size-2" aria-hidden="true"><path d="M0 0v8l8-4z" /></svg><Down />
        </div>
      </section>

      <section className="absolute top-0.5 right-8 left-[338px] flex h-[17px] items-center gap-2 border border-[#999] bg-[#bfcddb] pr-1 pl-0.5">
        <h2 className="flex-1 font-[Noto_Sans,sans-serif] text-[8px] leading-3 font-bold">Resource Manager</h2>
        <button type="button" aria-label="Help" className="text-[7px] font-bold">?</button>
        <button type="button" aria-label="Pin"><Pin side /></button>
        <button type="button" aria-label="Close resource manager"><X /></button>
      </section>
    </>
  );
}

const ROWS = [["Dash3", 2], ["Dash4", 2], ["Dash5", 2], ["Dash6", 2], ["Grey5", 2], ["RedLine", 2], ["Section", 2], ["Sightline", 2], ["Overhead", 1], ["SYMB", 0], ["IRON", 1], ["UNIT GUIDE", 1]];
const INDENT = ["pl-5", "pl-[43px]", "pl-[53px]"];

function RightSide() {
  return (
    <aside className="flex w-[129px] shrink-0 flex-col border-r border-[#ddd] pr-px pl-0.5">
      <PaneHead title="Object Info - Shape" help />
      <div role="tablist" className="flex h-[15px] shrink-0 items-center font-[Roboto,sans-serif] text-[8px] leading-[10px]">
        {["Shape", "Data", "Render"].map((t, i) => (
          <button key={t} type="button" role="tab" aria-selected={i === 0} className={`h-3 border-r border-[#ccc] px-1 ${i ? "" : "bg-[#fafafa]"}`}>{t}</button>
        ))}
        <span className="ml-auto flex"><Pill label="Object info options" /></span>
      </div>
      <p className="h-3.5 shrink-0 border border-[#aaa] bg-[#f2f2f2] pl-0.5 font-[Noto_Sans,sans-serif] text-[8px] leading-3 font-bold">No Selection</p>
      <div className="mt-px flex-1 border border-[#d0d0d0]" />
      <div className="flex h-4 shrink-0 items-center gap-0.5 pl-0.5 text-[7px] text-[#999]">
        <label htmlFor="objname">Name:</label>
        <input id="objname" className="h-[11px] min-w-0 flex-1 border border-[#bbb] bg-[#efefef] px-0.5 text-black outline-none" />
      </div>
      <div className="mt-px mb-0.5 flex shrink-0 flex-col"><PaneHead title="Navigation - Classes" help /></div>
      <div className="flex h-3.5 shrink-0 items-center">
        {[["classes", "Classes"], ["layers", "Design Layers"], ["frame", "Sheet Layers"], ["net", "Viewports"], ["eyebox", "Saved Views"], ["refer", "References"]].map(([n, l], i) => (
          <Tool key={l} n={n} label={l} className={`h-3 w-4 border-r border-[#ccc] ${i ? "" : "bg-[#fafafa]"}`} art="size-2.5" />
        ))}
        <span className="ml-auto flex"><Pill label="Navigation options" /></span>
      </div>
      <div className="flex shrink-0 flex-col gap-1.5 py-[5px] pl-0.5 text-[7px] leading-[10px]">
        <div className="flex items-center justify-between"><span className="whitespace-nowrap">Class Options:</span><Pick label="Class options" value="Show/Snap/Modify Others" className="h-3 w-[76px]" /></div>
        <div className="flex items-center justify-between"><span>Filter:</span><Pick label="Filter" value="<All Classes>" className="h-3 w-[76px]" /></div>
      </div>
      <div className="flex h-3.5 shrink-0 items-center border border-[#bbb] bg-white px-0.5">
        <input type="search" aria-label="Search classes" placeholder="Search" className="min-w-0 flex-1 text-[7px] leading-[10px] outline-none placeholder:text-[#999]" />
        <svg viewBox="0 0 10 10" className="size-2.5" fill="none" stroke="#4a6fa8" aria-hidden="true"><circle cx="6" cy="4" r="3.300" /><path d="M3.500 6.500L.5 9.500" strokeWidth="1.500" /></svg>
      </div>
      <div className="mt-[5px] flex h-[144px] shrink-0 border border-b-0 border-[#aaa] bg-white text-[7px]">
        <div className="flex min-w-0 flex-1 flex-col">
          <div className="flex h-[13px] shrink-0 items-center border-b border-[#ccc] bg-[#f0f0f0] leading-[10px]">
            <span className="w-[37px] border-r border-[#bbb] pl-1">Visibility</span>
            <span className="h-2.5 w-4 border-r border-[#bbb]" /><span className="pl-1">Class</span>
          </div>
          <div className="flex min-h-0 flex-1 items-end overflow-hidden">
            <table className="h-[136px] w-full shrink-0 table-fixed border-collapse leading-[8px] whitespace-nowrap">
              <tbody>
                {ROWS.map(([t, d]) => (
                  <tr key={t} className={t === "UNIT GUIDE" ? "bg-[#b5d8f3]" : ""}>
                    <td className="w-[13px] border-r border-[#999] p-0"><Art n="eye" className="mx-auto h-2.5 w-2.5" /></td>
                    <td className="w-3 border-r border-[#999] p-0" />
                    <td className="w-3 border-r border-[#999] p-0" />
                    <td className="overflow-hidden p-0">
                      <span className={`flex items-center gap-1 ${INDENT[d]}`}>
                        {d === 0 && <svg viewBox="0 0 6 6" className="size-[7px]" aria-hidden="true"><path d="M.5 1h5L3 5z" fill="#fff" stroke="#333" strokeWidth=".7" /></svg>}
                        {t}
                      </span>
                    </td>
                  </tr>
                ))}
              </tbody>
            </table>
          </div>
        </div>
        <div className="flex w-[11px] shrink-0 flex-col items-center justify-between bg-[#f0f0f0] py-1">
          <svg viewBox="0 0 6 4" className="w-1.5" aria-hidden="true"><path d="M.5 3.500L3 1l2.500 2.500" fill="none" stroke="#555" /></svg>
          <div className="flex flex-col items-center gap-2">
            <span className="h-3.5 w-[11px] bg-[#cdcdcd]" />
            <svg viewBox="0 0 6 4" className="w-1.5" aria-hidden="true"><path d="M.5.5L3 3 5.500.5" fill="none" stroke="#333" /></svg>
          </div>
        </div>
      </div>
      <div className="flex h-[11px] shrink-0 items-center bg-[#f0f0f0] pl-1">
        <svg viewBox="0 0 4 6" className="h-1.5" aria-hidden="true"><path d="M3.500.5L1 3l2.500 2.500" fill="none" stroke="#333" /></svg>
        <span className="ml-1 h-2.5 w-10 bg-[#cdcdcd]" />
        <svg viewBox="0 0 4 6" className="mr-4 ml-auto h-1.5" aria-hidden="true"><path d="M.5.5L3 3 .5 5.500" fill="none" stroke="#333" /></svg>
      </div>
    </aside>
  );
}

export default function App() {
  return (
    <div className="flex min-h-screen flex-col overflow-hidden bg-[#f0f0f0] font-[Liberation_Sans,Arial,sans-serif] text-[#1a1a1a]">
      <header className="flex h-[15px] shrink-0 items-center bg-white pr-3 pl-0.5">
        <svg viewBox="0 0 10 10" className="size-[10px]" aria-hidden="true"><circle cx="5" cy="5" r="5" fill="#222" /><path d="M3 3l2 4 2-4" fill="none" stroke="#fff" /></svg>
        <h1 className="ml-[3px] flex-1 font-[Lato,sans-serif] text-[8px] leading-3 whitespace-nowrap">Vectorworks Spotlight 2021 - [Our Town-JLA working.vwx - WATERMARKED FILE]</h1>
        <div className="flex items-center gap-6">
          <button type="button" aria-label="Minimize" className="h-px w-1.5 bg-[#444]" />
          <button type="button" aria-label="Restore"><svg viewBox="0 0 8 8" className="size-[7px]" fill="none" stroke="#333" aria-hidden="true"><path d="M.5 2.500h5v5h-5zM2.500 2V.5h5v5H6" /></svg></button>
          <button type="button" aria-label="Close"><X color="#555" /></button>
        </div>
      </header>

      <nav className="flex h-[18px] shrink-0 items-center border-b border-[#d2d2d2] pl-0.5 font-[Roboto,sans-serif] text-[8px] leading-3 whitespace-nowrap">
        <Art n="vw" className="mr-[7px] h-2.5 w-2.5" />
        <div className="flex gap-2.5">
          {["File", "Edit", "View", "Modify", "Model", "Spotlight", "Tools", "Text", "Event Design", "Window", "Cloud", "Help"].map((t) => <button key={t} type="button">{t}</button>)}
        </div>
        <div className="ml-auto flex items-center">
          <button type="button" aria-label="Search" className="mr-3.5"><Art n="mag" className="size-1.5" /></button>
          <button type="button" aria-label="Notifications" className="mr-3">
            <svg viewBox="0 0 8 8" className="size-2" aria-hidden="true"><path d="M1 6V4q1-3 4-2v4z" fill="#888" /><circle cx="5" cy="3" r="2.800" fill="#e02020" /></svg>
          </button>
          <button type="button" className="mr-6 flex items-center gap-1">
            <svg viewBox="0 0 6 7" className="h-[7px] w-1.5" aria-hidden="true"><path d="M.5 3h5v4h-5z" fill="#555" /><path d="M1.500 3V1.500q1.500-1.500 3 0V3" fill="none" stroke="#777" /></svg>
            Sign In
          </button>
          <div className="mt-1 mr-0.5 flex items-end gap-[7px]">
            <button type="button" aria-label="Minimize document" className="mb-px h-0.5 w-1 bg-[#222]" />
            <button type="button" aria-label="Restore document"><svg viewBox="0 0 8 8" className="size-1.5" fill="none" stroke="#222" strokeWidth="1.500" aria-hidden="true"><path d="M.7 3h4v4h-4zM3 2.500V1h4v4H5.500" /></svg></button>
            <button type="button" aria-label="Close document"><X /></button>
          </div>
        </div>
      </nav>

      <div className="flex flex-1 pt-px">
        <LeftSide />
        <main className="flex min-w-0 flex-1 flex-col border-x-2 border-[#c6c6c6]">
          <div className="flex h-[13px] shrink-0 items-center border-b border-[#c8c8c8] bg-[#f7f7f7]">
            <svg viewBox="0 0 12 12" className="h-full w-3" aria-hidden="true"><path d="M0 12L12 0v12z" fill="#fff" /><path d="M0 12L12 0" stroke="#bbb" /></svg>
            <div className="flex h-full items-center gap-1.5 bg-white pr-1 pl-1.5">
              <span className="font-[Noto_Sans,sans-serif] text-[8px] leading-3 font-bold whitespace-nowrap">Our Town-JLA working....</span>
              <button type="button" aria-label="Close tab"><X /></button>
            </div>
            <button type="button" aria-label="New tab" className="h-full w-4 border-x border-[#c5c5c5] bg-[#f0f0f0]" />
            <button type="button" aria-label="Open tab list" className="mr-0.5 ml-auto"><Down /></button>
          </div>
          <ViewBar />
          <ToolBar />
          <div className="relative flex-1 overflow-hidden">
            <Drawing />
            <Windows />
          </div>
        </main>
        <RightSide />
      </div>

      <footer className="flex h-[13px] shrink-0 items-center justify-end border-t border-[#c6c6c6] pr-px text-[7px] leading-[10px]">
        <span className="mr-0.5 bg-[#7ccf7c] px-px font-[Noto_Sans,sans-serif] text-[8px] font-bold text-[#111]">Autosave timer reset.</span>
        <span className="border border-[#ccc] leading-[9px] text-[#888]">CAP</span>
        <span className="border border-[#ccc] leading-[9px] text-black">NUM</span>
        <span className="border border-[#ccc] leading-[9px] text-[#888]">SCRL</span>
        <svg viewBox="0 0 4 6" className="ml-0.5 h-1 w-1" aria-hidden="true"><path d="M0 0v6l4-3z" /></svg>
      </footer>
    </div>
  );
}
